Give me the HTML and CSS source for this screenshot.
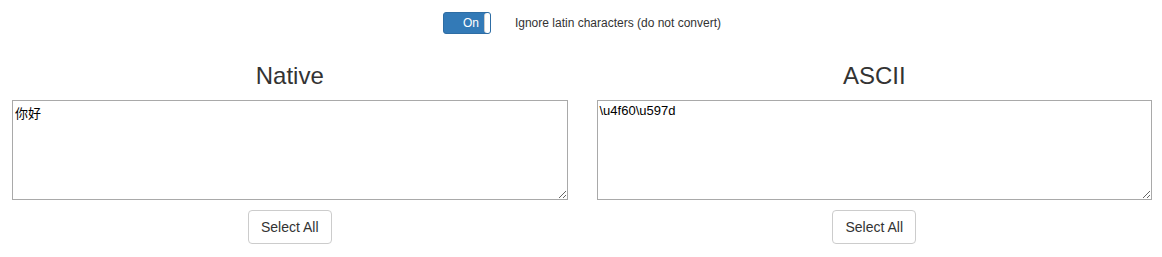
FILE: index.html
```html
<!DOCTYPE html>
<html>
<head>
<meta charset="utf-8">
<link rel="stylesheet" href="styles.css">
</head>
<body>
<div class="top-row">
  <div class="toggle">
    <span class="toggle-on">On</span>
    <span class="toggle-handle"></span>
  </div>
  <span class="toggle-label">Ignore latin characters (do not convert)</span>
</div>
<div class="panes">
  <div class="pane">
    <h2 class="pane-title">Native</h2>
    <textarea class="pane-text" spellcheck="false">你好</textarea>
    <button class="btn">Select All</button>
  </div>
  <div class="pane">
    <h2 class="pane-title">ASCII</h2>
    <textarea class="pane-text" spellcheck="true">\u4f60\u597d</textarea>
    <button class="btn">Select All</button>
  </div>
</div>
</body>
</html>
```

FILE: styles.css
```css
html, body {
  margin: 0;
  padding: 0;
  background: #fff;
  font-family: "Liberation Sans", Arial, "Noto Sans CJK SC", sans-serif;
  color: #333;
}

.top-row {
  display: flex;
  justify-content: center;
  align-items: center;
  gap: 24px;
  padding: 12px 0 0 2px;
}

.toggle {
  position: relative;
  width: 48px;
  height: 22px;
  box-sizing: border-box;
  background: #337ab7;
  border: 1px solid #2e6da4;
  border-radius: 3px;
  overflow: hidden;
}

.toggle-on {
  position: absolute;
  left: 0;
  right: 0;
  top: 0;
  bottom: 0;
  display: flex;
  align-items: center;
  justify-content: flex-end;
  padding-right: 11px;
  color: #fff;
  font-size: 12px;
}

.toggle-handle {
  position: absolute;
  right: 0;
  top: 0;
  bottom: 0;
  width: 5px;
  background: #fff;
  border-left: 1px solid #ccc;
  border-radius: 3px 0 0 3px;
}

.toggle-label {
  font-size: 12px;
  color: #333;
}

.panes {
  display: grid;
  grid-template-columns: 1fr 1fr;
  column-gap: 29px;
  padding: 0 10px 0 12px;
}

.pane {
  display: flex;
  flex-direction: column;
  align-items: center;
}

.pane-title {
  font-size: 24px;
  font-weight: 500;
  line-height: 1.1;
  margin: 29px 0 11px;
  color: #333;
}

.pane-text {
  display: block;
  width: 100%;
  height: 100px;
  box-sizing: border-box;
  border: 1px solid #a9a9a9;
  padding: 2px;
  margin: 0;
  font-family: "Liberation Sans", Arial, "Noto Sans CJK SC", sans-serif;
  font-size: 13px;
  color: #000;
}

.btn {
  margin-top: 10px;
  padding: 6px 12px;
  font-family: "Liberation Sans", Arial, sans-serif;
  font-size: 14px;
  line-height: 20px;
  color: #333;
  background: #fff;
  border: 1px solid #ccc;
  border-radius: 4px;
}
```
